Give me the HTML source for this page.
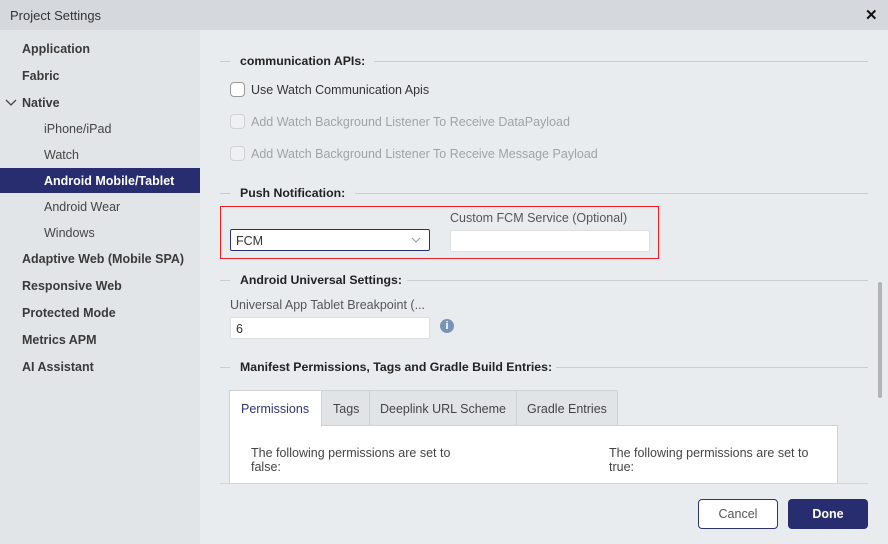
<!DOCTYPE html>
<html><head><meta charset="utf-8"><style>
*{box-sizing:border-box;margin:0;padding:0}
body{width:888px;height:544px;overflow:hidden;font-family:"Liberation Sans",sans-serif;font-size:12.5px;color:#333;background:#e9ecef;position:relative}
.a{position:absolute;white-space:nowrap}
.title{left:0;top:0;width:888px;height:30px;background:#d5d9de}
.side{left:0;top:30px;width:200px;height:514px;background:#e2e5e8}
.si{position:absolute;left:22px;font-weight:bold;color:#3a3a3a;transform:translateY(-50%);margin-top:1px}
.sub{left:44px;font-weight:normal;color:#444}
.hd{font-weight:bold;color:#222;transform:translateY(-50%);font-size:12.3px}
.line{height:1px;background:#c9ccd0}
.cb{width:15px;height:15px;border:1px solid #9a9a9a;border-radius:4px;background:#fff}
.cb.d{border-color:#d0d2d5;background:#eef0f2}
.lb{transform:translateY(-50%);margin-top:1px}
.dis{color:#a0a3a7}
.inp{background:#fff;border:1px solid #dde0e3;border-radius:2px}
</style></head><body>
<div class="a title"></div>
<div class="a" style="left:10px;top:8px;font-size:13px;color:#333">Project Settings</div>
<div class="a" style="left:865px;top:6px;font-size:15px;font-weight:bold;color:#111">✕</div>
<div class="a side"></div>
<div class="a" style="left:0;top:168px;width:200px;height:25px;background:#272d6f"></div>
<div class="si" style="top:48px">Application</div>
<div class="si" style="top:75px">Fabric</div>
<div class="si" style="top:102px">Native</div>
<svg class="a" style="left:5px;top:99px" width="12" height="8"><path d="M1 1 L6 6 L11 1" fill="none" stroke="#444" stroke-width="1.3"/></svg>
<div class="si sub" style="top:128px">iPhone/iPad</div>
<div class="si sub" style="top:154px">Watch</div>
<div class="si sub" style="top:180px;color:#fff;font-weight:bold">Android Mobile/Tablet</div>
<div class="si sub" style="top:206px">Android Wear</div>
<div class="si sub" style="top:232px">Windows</div>
<div class="si" style="top:258px">Adaptive Web (Mobile SPA)</div>
<div class="si" style="top:285px">Responsive Web</div>
<div class="si" style="top:312px">Protected Mode</div>
<div class="si" style="top:339px">Metrics APM</div>
<div class="si" style="top:366px">AI Assistant</div>

<div class="a line" style="left:220px;top:61px;width:10px"></div>
<div class="a hd" style="left:240px;top:61px">communication APIs:</div>
<div class="a line" style="left:374px;top:61px;width:494px"></div>
<div class="a cb" style="left:230px;top:82px"></div>
<div class="a lb" style="left:251px;top:89px">Use Watch Communication Apis</div>
<div class="a cb d" style="left:230px;top:114px"></div>
<div class="a lb dis" style="left:251px;top:121px">Add Watch Background Listener To Receive DataPayload</div>
<div class="a cb d" style="left:230px;top:146px"></div>
<div class="a lb dis" style="left:251px;top:153px">Add Watch Background Listener To Receive Message Payload</div>

<div class="a line" style="left:220px;top:193px;width:10px"></div>
<div class="a hd" style="left:240px;top:193px">Push Notification:</div>
<div class="a line" style="left:355px;top:193px;width:513px"></div>
<div class="a" style="left:220px;top:206px;width:439px;height:53px;border:1px solid #e8202a"></div>
<div class="a" style="left:230px;top:229px;width:200px;height:22px;background:#fff;border:1px solid #2a3170;border-radius:2px"></div>
<div class="a lb" style="left:236px;top:240px;color:#333">FCM</div>
<svg class="a" style="left:411px;top:237px" width="10" height="6"><path d="M1 1 L5 5 L9 1" fill="none" stroke="#999" stroke-width="1"/></svg>
<div class="a lb" style="left:450px;top:217px;color:#555">Custom FCM Service (Optional)</div>
<div class="a inp" style="left:450px;top:230px;width:200px;height:22px"></div>

<div class="a line" style="left:220px;top:280px;width:10px"></div>
<div class="a hd" style="left:240px;top:280px">Android Universal Settings:</div>
<div class="a line" style="left:407px;top:280px;width:461px"></div>
<div class="a lb" style="left:230px;top:304px;color:#555">Universal App Tablet Breakpoint (...</div>
<div class="a inp" style="left:230px;top:317px;width:200px;height:22px"></div>
<div class="a lb" style="left:236px;top:328px">6</div>
<div class="a" style="left:440px;top:319px;width:14px;height:14px;border-radius:50%;background:#7a95b4;color:#fff;font-size:11px;font-weight:bold;text-align:center;line-height:14px">i</div>

<div class="a line" style="left:220px;top:367px;width:10px"></div>
<div class="a hd" style="left:240px;top:367px">Manifest Permissions, Tags and Gradle Build Entries:</div>
<div class="a line" style="left:556px;top:367px;width:312px"></div>

<div class="a" style="left:229px;top:425px;width:609px;height:60px;background:#fff;border:1px solid #cfd2d6;border-bottom:none"></div>
<div class="a" style="left:321px;top:390px;width:297px;height:36px;background:#e1e4e7;border:1px solid #cfd2d6"></div>
<div class="a" style="left:229px;top:390px;width:93px;height:37px;background:#fff;border:1px solid #cfd2d6;border-bottom:none"></div>
<div class="a" style="left:369px;top:390px;width:1px;height:35px;background:#cfd2d6"></div>
<div class="a" style="left:516px;top:390px;width:1px;height:35px;background:#cfd2d6"></div>
<div class="a lb" style="left:241px;top:408px;color:#2e3472">Permissions</div>
<div class="a lb" style="left:333px;top:408px;color:#444">Tags</div>
<div class="a lb" style="left:380px;top:408px;color:#444">Deeplink URL Scheme</div>
<div class="a lb" style="left:527px;top:408px;color:#444">Gradle Entries</div>
<div class="a" style="left:251px;top:446px;color:#444;line-height:14px">The following permissions are set to<br>false:</div>
<div class="a" style="left:609px;top:446px;color:#444;line-height:14px">The following permissions are set to<br>true:</div>
<div class="a" style="left:220px;top:483px;width:648px;height:1px;background:#d3d6d9"></div>
<div class="a" style="left:200px;top:484px;width:688px;height:60px;background:#e9ecef"></div>
<div class="a" style="left:878px;top:282px;width:4px;height:116px;border-radius:2px;background:#b3b3b3"></div>

<div class="a" style="left:698px;top:499px;width:80px;height:30px;border:1px solid #2e3472;border-radius:4px;background:#fff;text-align:center;line-height:28px;color:#555">Cancel</div>
<div class="a" style="left:788px;top:499px;width:80px;height:30px;border-radius:4px;background:#272d6f;text-align:center;line-height:30px;color:#fff;font-weight:bold">Done</div>
</body></html>
